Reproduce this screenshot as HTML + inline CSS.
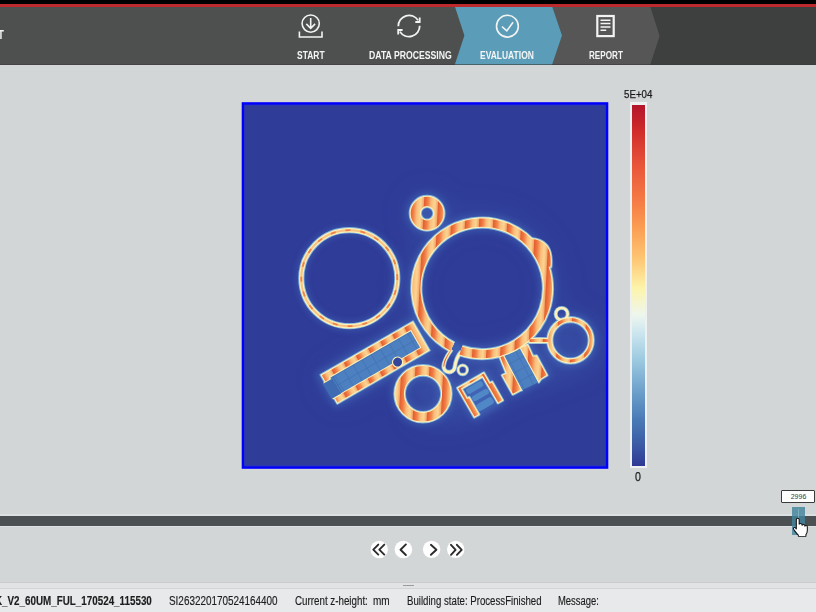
<!DOCTYPE html>
<html><head><meta charset="utf-8">
<style>
html,body{margin:0;padding:0;}
body{width:816px;height:612px;overflow:hidden;position:relative;background:#d3d6d7;font-family:"Liberation Sans",sans-serif;}
.abs{position:absolute;}
#topblack{left:0;top:0;width:816px;height:4px;background:#000;}
#topred{left:0;top:4px;width:816px;height:2.6px;background:#bc2a2d;z-index:2;}
#header{left:0;top:6.5px;width:816px;height:58.5px;background:#4e504f;}
#hdrsvg{left:0;top:6px;}
.lbl{position:absolute;color:#f4f6f5;font-weight:bold;font-size:11px;line-height:11px;white-space:nowrap;transform-origin:0 0;}
#content{left:0;top:65px;width:816px;height:517px;background:#d3d6d7;}
#status{left:0;top:588px;width:816px;height:24px;background:#e7e9ea;border-top:1px solid #d2d4d5;box-sizing:border-box;}
#split{left:0;top:582px;width:816px;height:6px;background:#e1e3e4;border-top:1px solid #c9cbcc;box-sizing:border-box;}
.st{position:absolute;top:594.6px;font-size:12px;line-height:12px;color:#1c1c1c;-webkit-text-stroke:0.15px #1c1c1c;white-space:nowrap;transform-origin:0 0;}
</style></head><body>
<div id="topblack" class="abs"></div>
<div id="topred" class="abs"></div>
<div id="header" class="abs"></div>
<svg id="hdrsvg" class="abs" width="816" height="59" viewBox="0 6 816 59">
  <polygon points="650,6 816,6 816,65 650,65 659.5,36" fill="#3e403f"/>
  <polygon points="552,6 650,6 659.5,36 650,65 552,65 562,36" fill="#555655"/>
  <polygon points="454.7,6 552,6 562,35.5 552,65 454.7,65 464.4,35.5" fill="#5b9db8"/>
  <rect x="0" y="64" width="816" height="1" fill="#3a3b3b" opacity="0.6"/>
  <!-- start icon -->
  <g fill="none" stroke="#f2f3f2" stroke-width="1.6">
    <circle cx="310.7" cy="23.6" r="8.6"/>
    <path d="M310.7 18 V28.2 M306.3 23.9 L310.7 28.3 L315.1 23.9"/>
    <path d="M299.4 31.6 V37 H322 V31.6"/>
  </g>
  <!-- refresh icon -->
  <g fill="none" stroke="#f2f3f2" stroke-width="1.8" stroke-linecap="butt">
    <path d="M398.3 26.3 A10.7 10.7 0 0 1 418.1 20.4"/>
    <path d="M419.7 17.6 V22 H415.3"/>
    <path d="M419.7 25.7 A10.7 10.7 0 0 1 399.9 31.6"/>
    <path d="M398.2 34.4 V30 H402.6"/>
  </g>
  <!-- check icon -->
  <g fill="none" stroke="#f2f3f2" stroke-width="1.6">
    <circle cx="507.4" cy="26.2" r="10.9"/>
    <path d="M502 26.7 L506.8 30.8 L513.1 22.3"/>
  </g>
  <!-- report icon -->
  <g fill="none" stroke="#f2f3f2">
    <rect x="597.3" y="16" width="16.4" height="20.1" stroke-width="2.2"/>
    <path d="M600.5 20.3 H610.5 M600.5 23.6 H610.5 M600.5 26.9 H610.5 M600.5 30.3 H606.2" stroke-width="1.5"/>
  </g>
</svg>
<div class="lbl" style="left:-2.4px;top:28.8px;font-size:12px;line-height:12px;transform:scaleX(.8);">T</div>
<div class="lbl" style="left:296.7px;top:49.5px;font-size:11.5px;transform:scaleX(.7365);">START</div>
<div class="lbl" style="left:368.6px;top:49.5px;font-size:11.5px;transform:scaleX(.7547);">DATA PROCESSING</div>
<div class="lbl" style="left:480.3px;top:49.5px;font-size:11.5px;transform:scaleX(.7375);">EVALUATION</div>
<div class="lbl" style="left:588.5px;top:49.5px;font-size:11.5px;transform:scaleX(.7069);">REPORT</div>

<!-- heatmap -->
<svg class="abs" style="left:0;top:0" width="816" height="612">
  <defs>
    <linearGradient id="saw" x1="0" y1="0" x2="1" y2="0">
      <stop offset="0" stop-color="#e35a2e"/>
      <stop offset="0.28" stop-color="#f07e46"/>
      <stop offset="0.52" stop-color="#f9bd7a"/>
      <stop offset="0.78" stop-color="#fcd594"/>
      <stop offset="1" stop-color="#f3a262"/>
    </linearGradient>
    <pattern id="stripe" patternUnits="userSpaceOnUse" width="14" height="60" patternTransform="rotate(3)">
      <rect x="0" y="0" width="14" height="60" fill="url(#saw)"/>
    </pattern>
    <pattern id="grid" patternUnits="userSpaceOnUse" width="10" height="10" patternTransform="rotate(-28)">
      <rect width="10" height="10" fill="#4c80c1"/>
      <path d="M0 0.4 H10 M0.4 0 V10" stroke="#426fb0" stroke-width="0.7"/>
    </pattern>
    <pattern id="grid0" patternUnits="userSpaceOnUse" width="10.5" height="9.5" x="0.3" y="0.2">
      <rect width="10.5" height="9.5" fill="#4c80c1"/>
      <path d="M0 0.4 H10.5 M0.4 0 V9.5" stroke="#426fb0" stroke-width="0.7"/>
    </pattern>
    <filter id="blur" x="-20%" y="-20%" width="140%" height="140%"><feGaussianBlur stdDeviation="3.5"/></filter>
    <filter id="bigblur" x="-50%" y="-50%" width="200%" height="200%"><feGaussianBlur stdDeviation="14"/></filter>
    <clipPath id="sq"><rect x="243" y="103.5" width="364" height="364"/></clipPath>
  </defs>
  <rect x="243" y="103.5" width="364" height="364" fill="#2f3c98" stroke="#0000ff" stroke-width="2.6"/>
  <rect x="244.8" y="105.3" width="360.4" height="360.4" fill="none" stroke="#2a37b8" stroke-width="1"/>
  <g clip-path="url(#sq)">
    <!-- haze -->
    <g filter="url(#bigblur)" opacity="0.3" fill="#4a70bc">
      <circle cx="427" cy="213" r="20"/>
      <circle cx="482.2" cy="288.4" r="73" fill="none" stroke="#4a70bc" stroke-width="10"/>
      <path d="M318 376 L414 320 L432 352 L337 406 Z"/>
      <path d="M395 365 L540 340 L600 320 L596 365 L505 400 L475 420 L420 425 Z"/>
      <circle cx="570" cy="340" r="26"/>
    </g>
    <!-- halo -->
    <g filter="url(#blur)" opacity="0.5" fill="none" stroke="#4b7cc4">
      <circle cx="349.3" cy="278.2" r="48" stroke-width="7"/>
      <circle cx="427.1" cy="213.3" r="11.85" stroke-width="16"/>
      <circle cx="482.2" cy="288.4" r="65.8" stroke-width="15"/>
      <circle cx="570.5" cy="340.3" r="21" stroke-width="10"/>
      <circle cx="423" cy="393.8" r="23.4" stroke-width="15"/>
      <path d="M320 375 L413 321.5 L430 350.6 L337 403.7 Z" fill="#4b7cc4" stroke-width="6"/>
      <path d="M457 388 L484 372.5 L502 401 L475 417 Z M499 356 L528 344 L547 375 L513 394 Z" fill="#4b7cc4" stroke-width="6"/>
    </g>

    <!-- rim -->
    <g fill="none" stroke="#7fb3dc" stroke-linejoin="round">
      <circle cx="349.3" cy="278.2" r="48" stroke-width="6.2"/>
      <circle cx="427.1" cy="213.3" r="11.85" stroke-width="13.2"/>
      <path d="M452.3 347 A65.8 65.8 0 1 1 460.8 350.6" stroke-width="12.2"/>
      <circle cx="561.7" cy="314" r="6" stroke-width="4.2"/>
      <circle cx="570.5" cy="340.3" r="20.7" stroke-width="7.2"/>
      <circle cx="423" cy="393.8" r="23.4" stroke-width="12.6"/>
      <circle cx="462.7" cy="369.9" r="4.6" stroke-width="3.5"/>
      <path d="M451.5 349.5 C447.5 355, 443.8 361, 443.6 366.5 A5.6 5.6 0 0 0 454.6 368 C455.5 361, 458 355, 461.5 351.5" stroke-width="4.6"/>
      <path d="M531 238.5 Q541 239 546.5 245 Q552.5 252 551 267 L543 268 L532 244 Z" stroke-width="2.8"/>
      <path d="M529 338.6 Q540 338 549 338.6 L549 342.6 L529 342.6 Z" stroke-width="2.8"/>
      <g transform="translate(375.1 362.6) rotate(-30)"><rect x="-53.5" y="-16.8" width="107" height="33.6" stroke-width="1.8"/></g>
      <g transform="translate(457.4 388) rotate(-30)"><path d="M0 0 H30.5 V12 H33.2 V33.4 H27.6 V13 H27.5 V2.8 H3.2 V14 H5.6 V33.8 H0.8 L0 33.8 Z" stroke-width="2.8"/></g>
      <path d="M499.4 356.2 L503.1 354.5 L521.7 390.2 L520.7 390.2 L512.7 394.4 L502.1 375.3 L506.3 373.2 Z" stroke-width="2.8"/>
      <path d="M520.1 347.7 L527.6 344.6 L532.9 356.2 L536.6 355.7 L547.2 375.3 L540.8 379.1 L538.7 382.2 Z" stroke-width="2.8"/>
    </g>

    <!-- left rectangle frame -->
    <g transform="translate(375.1 362.6) rotate(-30)">
      <rect x="-53.5" y="-16.8" width="107" height="33.6" fill="#fdf0b8"/>
      <rect x="-52.4" y="-15.7" width="104.8" height="31.4" fill="url(#stripe)"/>
      <rect x="-47.5" y="-10.4" width="95" height="20.8" fill="#fdf0b8"/>
      <rect x="-46.5" y="-9.4" width="93" height="18.8" fill="url(#grid0)"/>
      <rect x="-55" y="-8.6" width="9" height="19.4" fill="#fdf0b8"/>
      <rect x="-56" y="-7.6" width="11" height="17.4" fill="#3f6bb2"/>
      <rect x="-44" y="-9.4" width="1" height="18.8" fill="#3a63a8" opacity="0.7"/>
      <circle cx="19.7" cy="10.8" r="5.6" fill="#fdf0b8"/>
      <circle cx="19.7" cy="10.8" r="4.5" fill="#34469c"/>
    </g>

    <!-- small middle bracket -->
    <g transform="translate(457.4 388) rotate(-30)">
      <path d="M0 0 H30.5 V12 H33.2 V33.4 H27.6 V13 H27.5 V2.8 H3.2 V14 H5.6 V33.8 H0.8 L0 33.8 Z" fill="url(#stripe)" stroke="#fdf0b8" stroke-width="1.1" stroke-linejoin="round"/>
      <rect x="6" y="5.2" width="18.5" height="6" rx="2.5" fill="#5088c7"/>
      <rect x="7.5" y="14.6" width="18" height="6" rx="2.5" fill="#5088c7"/>
      <rect x="7" y="24" width="18" height="7.5" rx="2.5" fill="#5088c7"/>
    </g>

    <!-- right bracket -->
    <path d="M503.1 356.8 L520.1 347.7 L538.7 382.2 L521.7 390.2 Z" fill="url(#grid)"/>
    <path d="M499.4 356.2 L503.1 354.5 L521.7 390.2 L520.7 390.2 L512.7 394.4 L502.1 375.3 L506.3 373.2 Z" fill="url(#stripe)" stroke="#fdf0b8" stroke-width="1.1" stroke-linejoin="round"/>
    <path d="M520.1 347.7 L527.6 344.6 L532.9 356.2 L536.6 355.7 L547.2 375.3 L540.8 379.1 L538.7 382.2 Z" fill="url(#stripe)" stroke="#fdf0b8" stroke-width="1.1" stroke-linejoin="round"/>

    <!-- ring edges -->
    <g fill="none" stroke="#fdf0b8">
      <circle cx="349.3" cy="278.2" r="48" stroke-width="4.4"/>
      <circle cx="427.1" cy="213.3" r="11.85" stroke-width="11.4"/>
      <path d="M452.3 347 A65.8 65.8 0 1 1 460.8 350.6" stroke-width="10.4"/>
      <circle cx="561.7" cy="314" r="6" stroke-width="2.6"/>
      <circle cx="570.5" cy="340.3" r="20.7" stroke-width="5.4"/>
      <circle cx="423" cy="393.8" r="23.4" stroke-width="10.8"/>
      <circle cx="462.7" cy="369.9" r="4.6" stroke-width="1.9"/>
      <path d="M451.5 349.5 C447.5 355, 443.8 361, 443.6 366.5 A5.6 5.6 0 0 0 454.6 368 C455.5 361, 458 355, 461.5 351.5" stroke-width="3"/>
    </g>
    <g fill="url(#stripe)" stroke="#fdf0b8" stroke-width="1.1" stroke-linejoin="round">
      <path d="M531 238.5 Q541 239 546.5 245 Q552.5 252 551 267 L543 268 L532 244 Z"/>
      <path d="M529 338.6 Q540 338 549 338.6 L549 342.6 L529 342.6 Z"/>
    </g>
    <g fill="none" stroke="url(#stripe)">
      <circle cx="349.3" cy="278.2" r="48" stroke-width="2" stroke="#f8c284"/>
      <circle cx="349.3" cy="278.2" r="48" stroke-width="1.8" stroke="#ef8248" stroke-dasharray="5 10" stroke-dashoffset="3"/>
      <circle cx="427.1" cy="213.3" r="11.85" stroke-width="9.2"/>
      <path d="M452.3 347 A65.8 65.8 0 1 1 460.8 350.6" stroke-width="8.2"/>
      <circle cx="570.5" cy="340.3" r="20.7" stroke-width="3.2"/>
      <circle cx="423" cy="393.8" r="23.4" stroke-width="8.6"/>
      <path d="M451.5 349.5 C447.5 355, 443.8 361, 443.6 366.5" stroke-width="1.2"/>
      <path d="M532 343 L548 343" stroke-width="0"/>
    </g>
  </g>
</svg>

<!-- colorbar -->
<div class="abs" style="left:629.8px;top:102.4px;width:17px;height:365.6px;background:#eef0f1;"></div>
<div class="abs" style="left:631.6px;top:104.8px;width:13.6px;height:361.4px;background:linear-gradient(to bottom,#b3152b 0%,#cf2b2a 7%,#e8553a 16.7%,#f57a45 26.3%,#fba055 34.6%,#fdc875 43%,#fdf4aa 50.7%,#eef6ee 58.2%,#c8e4ee 63.7%,#9ccae0 70.6%,#6fa2cc 78.9%,#4a7ab6 87.2%,#3a5aa5 94.2%,#2f3894 100%);"></div>
<div class="abs" style="left:623.9px;top:87.9px;font-size:11.5px;line-height:12px;color:#1a1a1a;-webkit-text-stroke:0.25px #1a1a1a;transform:scaleX(.845);transform-origin:0 0;">5E+04</div>
<div class="abs" style="left:634.6px;top:471.2px;font-size:12.5px;line-height:12px;color:#1a1a1a;-webkit-text-stroke:0.25px #1a1a1a;transform:scaleX(.85);transform-origin:0 0;">0</div>

<!-- slider -->
<div class="abs" style="left:0;top:514px;width:816px;height:13px;background:#dde0e2;"></div>
<div class="abs" style="left:0;top:515.5px;width:816px;height:10px;background:#4b5053;"></div>
<div class="abs" style="left:781px;top:489.5px;width:34px;height:13.5px;box-sizing:border-box;border:1.5px solid #3a3a3a;background:#fff;border-radius:1px;"></div>
<div class="abs" style="left:781.5px;top:492.6px;width:34px;text-align:center;font-size:7px;line-height:8px;color:#383838;">2996</div>
<div class="abs" style="left:791.6px;top:506.6px;width:13.2px;height:28.7px;background:rgba(66,132,156,0.82);"></div>
<div class="abs" style="left:797.6px;top:508.5px;width:1.2px;height:24px;background:rgba(150,200,215,0.55);"></div>

<svg class="abs" style="left:0;top:0" width="816" height="612">
  <path transform="translate(793 518.3) scale(0.95 0.86)" d="M3.5 1.6 Q3.5 0 5 0 Q6.5 0 6.5 1.6 V7 Q6.6 6 8 6 Q9.5 6 9.5 7.5 V8.2 Q9.6 7.2 11 7.2 Q12.5 7.2 12.5 8.7 V9.3 Q12.6 8.3 13.8 8.3 Q15.1 8.3 15.1 9.8 V14.2 Q15 17 13.6 19 V21 H5.6 V19.6 Q4 18 2.2 15.2 L0.6 12.6 Q0 11.4 1 10.9 Q2 10.4 2.9 11.5 L3.5 12.4 Z" fill="#fff" stroke="#111" stroke-width="1.1" stroke-linejoin="round"/>
</svg>
<!-- nav buttons -->
<svg class="abs" style="left:0;top:0" width="816" height="612">
  <g fill="#fefefe">
    <circle cx="379.2" cy="549.5" r="8.7"/>
    <circle cx="403.4" cy="549.5" r="8.8"/>
    <circle cx="431.6" cy="549.4" r="8.7"/>
    <circle cx="455.7" cy="549.4" r="8.7"/>
  </g>
  <g fill="none" stroke="#2b2b2b" stroke-width="1.9" stroke-linecap="round" stroke-linejoin="round">
    <path d="M378.3 544.6 L373.3 549.6 L378.3 554.6 M384.3 544.6 L379.3 549.6 L384.3 554.6"/>
    <path d="M405.9 544.4 L400.5 549.7 L405.9 555"/>
    <path d="M430.9 544.8 L436.4 549.8 L430.9 554.8"/>
    <path d="M451 544.8 L455.6 549.8 L451 554.8 M456.9 544.8 L461.7 549.8 L456.9 554.8"/>
  </g>
</svg>

<!-- status -->
<div id="split" class="abs"></div>
<div class="abs" style="left:402.8px;top:584.6px;width:11.4px;height:1.6px;background:#999b9c;"></div>
<div id="status" class="abs"></div>
<div class="st" style="left:-5.06px;font-weight:bold;transform:scaleX(.819);">K_V2_60UM_FUL_170524_115530</div>
<div class="st" style="left:168.8px;transform:scaleX(.826);">SI263220170524164400</div>
<div class="st" style="left:294.9px;transform:scaleX(.815);">Current z-height:</div>
<div class="st" style="left:373.3px;transform:scaleX(.835);">mm</div>
<div class="st" style="left:406.7px;transform:scaleX(.804);">Building state: ProcessFinished</div>
<div class="st" style="left:557.7px;transform:scaleX(.784);">Message:</div>
</body></html>
